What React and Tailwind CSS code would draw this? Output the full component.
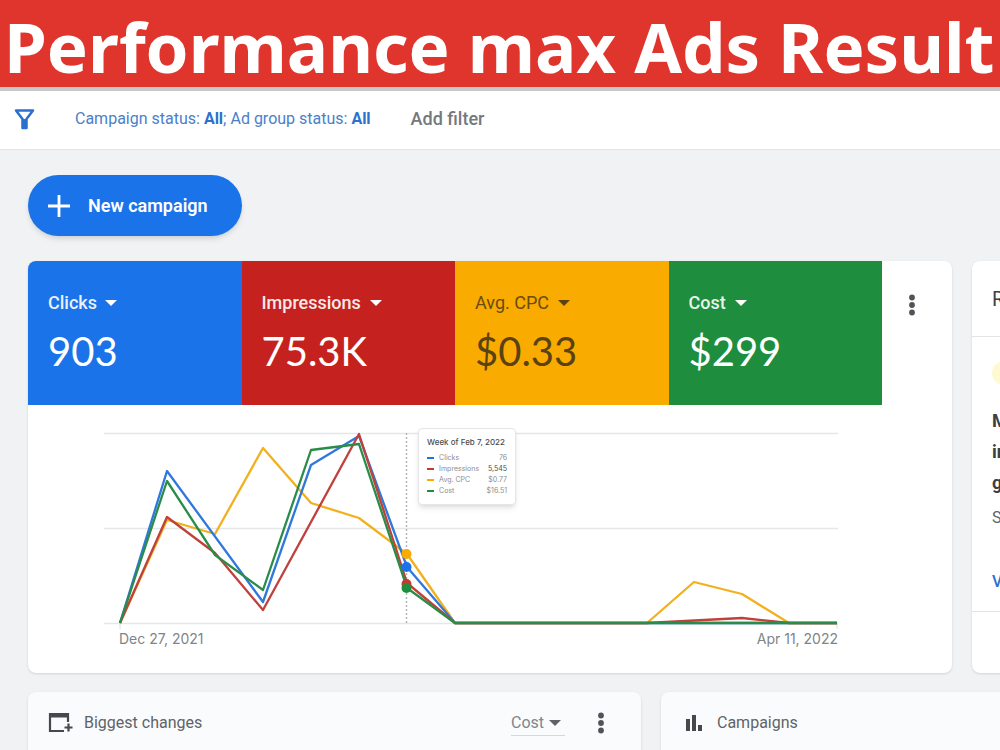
import React from 'react'

const metrics = [
  { name: 'Clicks', value: '903', tile: 'bg-[#1a73e8] text-white rounded-tl-lg', label: 'font-medium' },
  { name: 'Impressions', value: '75.3K', tile: 'bg-[#c5221f] text-white', label: 'font-medium' },
  { name: 'Avg. CPC', value: '$0.33', tile: 'bg-[#f9ab00] text-[#5a4214]', label: 'font-normal' },
  { name: 'Cost', value: '$299', tile: 'bg-[#1e8e3e] text-white', label: 'font-medium' }
]

const series = [
  { color: '#f2b01e', points: '16,190 63,87 111,101 159,15 207,70 255,85 303,121 351,190 543,190 590,149 638,161 685,190 733,190' },
  { color: '#2f78dc', points: '16,190 63,38 159,169 207,32 255,3 303,134 351,190 733,190' },
  { color: '#c0413b', points: '16,190 63,84 111,120 159,177 255,1 303,150 351,190 543,190 638,185 685,190 733,190' },
  { color: '#2a8c48', points: '16,190 63,48 111,122 159,157 207,17 255,11 303,155 351,190 733,190' }
]

const markers = [
  { y: 121, color: '#f9ab00' },
  { y: 134, color: '#1a73e8' },
  { y: 151, color: '#c5382f' },
  { y: 155, color: '#1e8e3e' }
]

const tooltipRows = [
  { name: 'Clicks', value: '76', color: 'bg-[#1a73e8]' },
  { name: 'Impressions', value: '5,545', color: 'bg-[#c5382f]' },
  { name: 'Avg. CPC', value: '$0.77', color: 'bg-[#f9ab00]' },
  { name: 'Cost', value: '$16.51', color: 'bg-[#1e8e3e]' }
]

const Caret = () => (
  <svg className="w-3 h-2 shrink-0" viewBox="0 0 12 8" fill="currentColor" aria-hidden="true">
    <path d="M0 1h12L6 7z" />
  </svg>
)

const MoreButton = () => (
  <button type="button" aria-label="More options" className="text-[#505357]">
    <svg className="w-6 h-6" viewBox="0 0 24 24" fill="currentColor">
      <circle cx="12" cy="4.500" r="2.900" />
      <circle cx="12" cy="12" r="2.900" />
      <circle cx="12" cy="19.500" r="2.900" />
    </svg>
  </button>
)

const MetricTile = ({ metric }) => (
  <div className={`flex-1 h-36 pt-7 pl-5 ${metric.tile}`}>
    <div className="flex items-center gap-2 h-7">
      <select
        aria-label={`${metric.name} metric`}
        className={`appearance-none bg-transparent text-lg opacity-90 ${metric.label}`}
      >
        <option>{metric.name}</option>
      </select>
      <Caret />
    </div>
    <div className="mt-2 text-[40px] leading-[52px] font-[Lato,sans-serif]">{metric.value}</div>
  </div>
)

const Chart = () => (
  <div className="relative pt-7 pl-[76px] pr-[114px]">
    <svg className="block w-full overflow-visible" viewBox="0 0 734 192" fill="none" role="img" aria-label="Weekly performance">
      <path d="M0 .5h734M0 95.500h734M0 190.500h734" stroke="#e4e6e8" strokeWidth="1.500" />
      <path d="M16 190v6M733 190v6" stroke="#dadce0" />
      <path d="M302.500 0v190" stroke="#b4b7ba" strokeWidth="1.500" strokeDasharray="2 2" />
      {series.map((line) => (
        <polyline key={line.color} points={line.points} stroke={line.color} strokeWidth="2.300" strokeLinejoin="round" />
      ))}
      {markers.map((marker) => (
        <circle key={marker.color} cx="302.500" cy={marker.y} r="5" fill={marker.color} />
      ))}
    </svg>
    <div className="flex justify-between pl-[15px] pt-1 text-sm leading-5 text-[#808488] font-[Inter,sans-serif]">
      <span>Dec 27, 2021</span>
      <span>Apr 11, 2022</span>
    </div>

    {/* Tooltip for the hovered week */}
    <div className="absolute top-[23px] left-[calc(42%+2px)] w-[98px] h-[77px] px-2 pt-2 bg-white rounded border border-[#e4e6e8] shadow-md font-[Inter,sans-serif] text-[7px] leading-[11px] text-[#8a8d91]">
      <div className="mb-1 text-[8px] leading-[11px] font-medium text-[#4a4d51] whitespace-nowrap">Week of Feb 7, 2022</div>
      {tooltipRows.map((row) => (
        <div key={row.name} className="flex items-center">
          <span className={`w-[7px] h-[2px] mr-[5px] ${row.color}`} />
          <span className="flex-1">{row.name}</span>
          <span className={row.name === 'Impressions' ? 'text-[#4a4d51]' : ''}>{row.value}</span>
        </div>
      ))}
    </div>
  </div>
)

const App = () => {
  return (
    <div className="h-screen overflow-hidden bg-[#f0f2f4] font-[Roboto,sans-serif] text-[#5f6368]">
      <header className="h-[87px] pl-1 bg-[#e0352d] overflow-hidden">
        <h1 className="text-[69px] leading-[92px] font-bold text-white whitespace-nowrap font-['Noto_Sans',sans-serif]">
          Performance max Ads Result
        </h1>
      </header>

      {/* Filter bar */}
      <div className="flex items-center h-[63px] px-3 pb-[3px] bg-white border-t-4 border-t-[#c8c8c8] border-b border-b-[#e2e4e6]">
        <button type="button" aria-label="Filters" className="text-[#2a70cf]">
          <svg className="w-6 h-6" viewBox="0 0 24 24" fill="none" aria-hidden="true">
            <path d="M4 3.500h17l-6.500 8.500v9h-4v-9z" stroke="currentColor" strokeWidth="2.500" strokeLinejoin="round" />
            <path d="M10 12h5v9h-5z" fill="currentColor" />
          </svg>
        </button>
        <a href="#filters" className="ml-[39px] text-base text-[#4b80c9]">
          Campaign status: <b className="text-[#2a70cf]">All</b>; Ad group status: <b className="text-[#2a70cf]">All</b>
        </a>
        <button type="button" className="ml-10 text-lg font-medium text-[#75787c]">Add filter</button>
      </div>

      <main className="pl-7 pt-[25px]">
        <button
          type="button"
          className="flex items-center gap-[18px] h-[61px] w-[214px] pl-5 rounded-full bg-[#1a73e8] text-white text-lg font-semibold shadow-md"
        >
          <svg className="w-[22px] h-[22px]" viewBox="0 0 22 22" fill="none" stroke="currentColor" strokeWidth="2.800" aria-hidden="true">
            <path d="M11 0v22M0 11h22" />
          </svg>
          New campaign
        </button>

        <div className="flex gap-5 mt-[25px]">
          <section className="flex-1 min-w-0 h-[412px] bg-white rounded-lg shadow">
            <div className="flex">
              {metrics.map((metric) => (
                <MetricTile key={metric.name} metric={metric} />
              ))}
              <div className="w-[70px] pt-8 pl-[18px]">
                <MoreButton />
              </div>
            </div>
            <Chart />
          </section>

          {/* Runs off the right edge of the window */}
          <aside className="w-80 -mr-[292px] shrink-0 h-[412px] bg-white rounded-lg shadow">
            <h2 className="h-[76px] pl-5 leading-[76px] text-xl text-[#3c4043] border-b border-[#e2e4e6]">R</h2>
            <div className="h-[275px] pl-5 pt-6 border-b border-[#e2e4e6]">
              <div className="w-6 h-6 rounded-full bg-[#fef9d0]" />
              <p className="mt-5 text-lg leading-[31px] font-bold text-[#3c4043]">
                M<br />in<br />g
              </p>
              <p className="mt-2 text-base">S</p>
              <a href="#view" className="block mt-10 text-base font-medium text-[#2a70cf]">V</a>
            </div>
          </aside>
        </div>

        <div className="flex gap-5 mt-[19px]">
          <section className="flex items-center w-[613px] h-[62px] pl-5 pr-7 bg-[#f9fbfc] rounded-t-lg shadow">
            <svg className="w-6 h-6 overflow-visible" viewBox="0 0 24 24" fill="none" stroke="#45484c" strokeWidth="2.200" aria-hidden="true">
              <path d="M20 11V3H2v17h14M20.500 12.500v8M16.500 16.500h8" />
              <path d="M2 4.500h18" strokeWidth="4" />
            </svg>
            <h2 className="ml-3 text-base">Biggest changes</h2>
            <div className="flex items-center gap-1 ml-auto pr-1 border-b border-[#d5d7da]">
              <select aria-label="Compare by" className="appearance-none bg-transparent text-base text-[#80868b]">
                <option>Cost</option>
              </select>
              <Caret />
            </div>
            <div className="ml-6 h-6">
              <MoreButton />
            </div>
          </section>
          <section className="flex items-center flex-1 h-[62px] px-5 bg-[#f9fbfc] rounded-tl-lg shadow">
            <svg className="w-6 h-6" viewBox="0 0 24 24" fill="#45484c" aria-hidden="true">
              <path d="M5 8h4v12H5zM11 4h4v16h-4zM17 14h4v6h-4z" />
            </svg>
            <h2 className="ml-3 text-base">Campaigns</h2>
          </section>
        </div>
      </main>
    </div>
  )
}

export default App
